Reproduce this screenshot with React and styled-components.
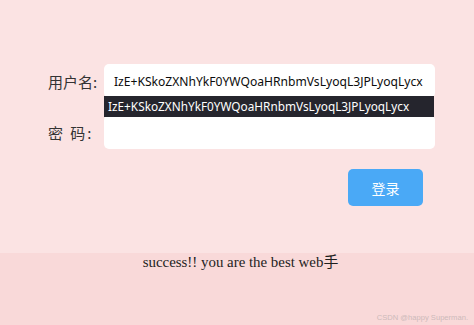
import React from "react";
import styled, { createGlobalStyle } from "styled-components";

const Global = createGlobalStyle`
  body {
    margin: 0;
    background: #fbe3e3;
    font-family: "Liberation Serif", serif;
  }
`;

const Page = styled.div`
  width: 474px;
  height: 325px;
  display: flex;
  flex-direction: column;
  overflow: hidden;
`;

const FormArea = styled.div`
  height: 253px;
  box-sizing: border-box;
  padding: 64px 0 0 48px;
  display: flex;
  flex-direction: column;
  position: relative;
`;

const Row = styled.div`
  display: flex;
  align-items: center;
  height: 34px;
  margin-bottom: ${(p) => p.$gap || 0}px;
`;

const Label = styled.label`
  width: 56px;
  font-family: "Noto Sans CJK SC", serif;
  font-size: 15px;
  color: #333;
  letter-spacing: ${(p) => p.$spread || 0}px;
`;

const Field = styled.div`
  width: 331px;
  height: 34px;
  box-sizing: border-box;
  background: #fff;
  border-radius: 5px;
  padding-left: 10px;
  display: flex;
  align-items: center;
  font-family: "Noto Sans", sans-serif;
  font-size: 12.1px;
  color: #0c0c0c;
  white-space: nowrap;
  overflow: hidden;
`;

const Suggest = styled.div`
  position: absolute;
  top: 96px;
  left: 104px;
  width: 330px;
  height: 21px;
  box-sizing: border-box;
  padding-left: 4px;
  background: #25252d;
  color: #fff;
  font-family: "Noto Sans", sans-serif;
  font-size: 11.8px;
  line-height: 21px;
  white-space: nowrap;
  overflow: hidden;
`;

const Actions = styled.div`
  display: flex;
  justify-content: flex-end;
  width: 375px;
  margin-top: 20px;
`;

const Button = styled.button`
  width: 75px;
  height: 37px;
  border: none;
  border-radius: 5px;
  background: #4aa9f6;
  color: #fff;
  font-family: "Noto Sans CJK SC", sans-serif;
  font-size: 14px;
`;

const Result = styled.div`
  flex: 1;
  background: #f9d9d9;
  display: flex;
  flex-direction: column;
  align-items: center;
`;

const Message = styled.div`
  padding-left: 7px;
  font-family: "Liberation Serif", "Noto Sans CJK SC", serif;
  font-size: 14.9px;
  line-height: 18px;
  color: #1e1e1e;
`;

const Mark = styled.div`
  margin-top: auto;
  align-self: flex-end;
  padding: 0 6px 3px 0;
  font-family: "Liberation Sans", sans-serif;
  font-size: 7.6px;
  color: #cdb9b9;
`;

const token = "IzE+KSkoZXNhYkF0YWQoaHRnbmVsLyoqL3JPLyoqLycx";

export default function App() {
  return (
    <Page>
      <Global />
      <FormArea>
        <Row $gap={17}>
          <Label>用户名:</Label>
          <Field>{token}</Field>
        </Row>
        <Row>
          <Label $spread={2}>密 码:</Label>
          <Field />
        </Row>
        <Actions>
          <Button>登录</Button>
        </Actions>
        <Suggest>{token}</Suggest>
      </FormArea>
      <Result>
        <Message>success!! you are the best web手</Message>
        <Mark>CSDN @happy Superman.</Mark>
      </Result>
    </Page>
  );
}
